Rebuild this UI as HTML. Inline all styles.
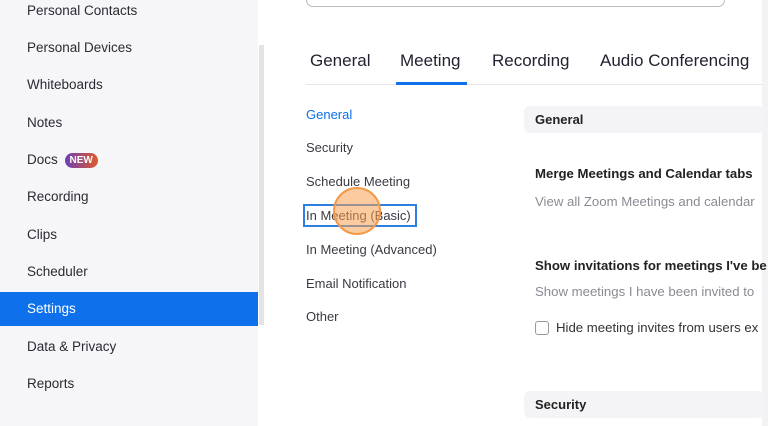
<!DOCTYPE html>
<html><head><style>
*{margin:0;padding:0;box-sizing:border-box}
body{width:768px;height:426px;overflow:hidden;background:#fff;font-family:"Liberation Sans",sans-serif;position:relative}
.a{position:absolute;white-space:nowrap}
#sb{position:absolute;left:0;top:0;width:258px;height:426px;background:#f6f6f8}
.si{position:absolute;left:27px;font-size:13.5px;color:#2a2a33}
.sel{position:absolute;left:0;top:292px;width:258px;height:34px;background:#0e71eb}
.sub{position:absolute;left:306px;font-size:13px;color:#3a3a44}
.tab{position:absolute;top:51px;font-size:17px;color:#222230}
.hdr{position:absolute;left:524px;width:240px;height:27px;background:#f4f4f6;border-radius:6px;font-size:13px;font-weight:bold;color:#222;padding:6px 11px}
.b{position:absolute;left:535px;font-size:13.2px;font-weight:bold;color:#222}
.g{position:absolute;left:535px;font-size:13.2px;color:#8a8a94}
</style></head><body>
<div id="sb"></div>
<div class="a" style="left:259px;top:45px;width:5px;height:280px;background:#e4e4e7"></div>
<div class="sel"></div>
<div class="si" style="top:3px">Personal Contacts</div>
<div class="si" style="top:40px">Personal Devices</div>
<div class="si" style="top:77px">Whiteboards</div>
<div class="si" style="top:115px">Notes</div>
<div class="si" style="top:152px">Docs <span style="display:inline-block;font-size:10px;font-weight:bold;color:#fff;background:linear-gradient(90deg,#6a3fb8,#e05a2a);border-radius:9px;padding:2px 5px;vertical-align:1px;margin-left:3px">NEW</span></div>
<div class="si" style="top:189px">Recording</div>
<div class="si" style="top:227px">Clips</div>
<div class="si" style="top:264px">Scheduler</div>
<div class="si" style="top:301px;color:#fff">Settings</div>
<div class="si" style="top:339px">Data &amp; Privacy</div>
<div class="si" style="top:376px">Reports</div>

<div class="a" style="left:306px;top:-20px;width:419px;height:27px;border:1px solid #bbb;border-radius:7px"></div>
<div class="a" style="left:762px;top:0;width:6px;height:426px;background:#f3f3f5"></div>

<div class="tab" style="left:310px">General</div>
<div class="tab" style="left:400px">Meeting</div>
<div class="tab" style="left:492px">Recording</div>
<div class="tab" style="left:600px">Audio Conferencing</div>
<div class="a" style="left:306px;top:84px;width:456px;height:1px;background:#e6e6ea"></div>
<div class="a" style="left:396px;top:82px;width:71px;height:3px;background:#0e71eb"></div>

<div class="sub" style="top:107px;color:#0e71eb">General</div>
<div class="sub" style="top:140px">Security</div>
<div class="sub" style="top:174px">Schedule Meeting</div>
<div class="a" style="left:303px;top:204px;width:114px;height:23px;border:2px solid #2f7fe0"></div>
<div class="sub" style="top:208px">In Meeting (Basic)</div>
<div class="a" style="left:333px;top:187px;width:48px;height:48px;border-radius:50%;background:rgba(250,160,80,.55);border:2px solid #f39a4a"></div>
<div class="sub" style="top:242px">In Meeting (Advanced)</div>
<div class="sub" style="top:276px">Email Notification</div>
<div class="sub" style="top:309px">Other</div>

<div class="hdr" style="top:106px">General</div>
<div class="b" style="top:166px">Merge Meetings and Calendar tabs</div>
<div class="g" style="top:194px">View all Zoom Meetings and calendar</div>
<div class="b" style="top:258px">Show invitations for meetings I've be</div>
<div class="g" style="top:284px">Show meetings I have been invited to</div>
<div class="a" style="left:535px;top:321px;width:14px;height:14px;border:1px solid #999;border-radius:3px"></div>
<div class="a" style="left:556px;top:320px;font-size:13.2px;color:#333">Hide meeting invites from users ex</div>
<div class="hdr" style="top:391px">Security</div>
</body></html>
